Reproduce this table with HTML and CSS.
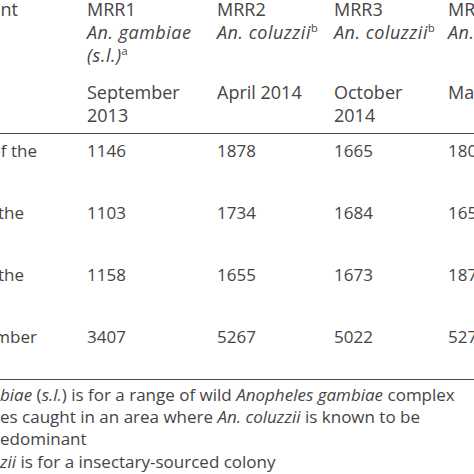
FILE: index.html
```html
<!DOCTYPE html>
<html>
<head>
<meta charset="utf-8">
<link rel="stylesheet" href="styles.css">
</head>
<body>
<div class="frame">
  <table class="tbl">
    <colgroup>
      <col class="w1"><col class="w2"><col class="w3"><col class="w4"><col class="w5">
    </colgroup>
    <thead>
      <tr class="h1">
        <td class="c1 head">Treatment</td>
        <td>MRR1<br><i>An. gambiae (s.l.)</i><sup>a</sup></td>
        <td>MRR2<br><i>An. coluzzii</i><sup>b</sup></td>
        <td>MRR3<br><i>An. coluzzii</i><sup>b</sup></td>
        <td>MRR4<br><i>An. coluzzii</i><sup>b</sup></td>
      </tr>
      <tr class="h2">
        <td class="c1"></td>
        <td>September 2013</td>
        <td>April 2014</td>
        <td>October 2014</td>
        <td>May 2015</td>
      </tr>
    </thead>
    <tbody>
      <tr>
        <td class="c1">Number of the</td>
        <td>1146</td><td>1878</td><td>1665</td><td>1800</td>
      </tr>
      <tr>
        <td class="c1 short">Caught in the</td>
        <td>1103</td><td>1734</td><td>1684</td><td>1650</td>
      </tr>
      <tr>
        <td class="c1 short">Caught in the</td>
        <td>1158</td><td>1655</td><td>1673</td><td>1870</td>
      </tr>
      <tr class="last">
        <td class="c1">Total number</td>
        <td>3407</td><td>5267</td><td>5022</td><td>5270</td>
      </tr>
    </tbody>
  </table>
  <div class="notes">
    <div class="note"><i>biae</i> (<i>s.l.</i>) is for a range of wild <i>Anopheles gambiae</i> complex</div>
    <div class="note">es caught in an area where <i>An. coluzzii</i> is known to be</div>
    <div class="note">edominant</div>
    <div class="note"><i>zii</i> is for a insectary-sourced colony</div>
  </div>
</div>
</body>
</html>
```

FILE: styles.css
```css
html, body {
  margin: 0;
  padding: 0;
  background: #ffffff;
}
.frame {
  width: 474px;
  height: 474px;
  overflow: hidden;
  font-family: "Open Sans", "Liberation Sans", sans-serif;
  font-size: 17px;
  font-weight: 400;
  color: #454545;
}
.tbl {
  table-layout: fixed;
  border-collapse: collapse;
  width: 748px;
  margin-left: -150px;
  margin-top: -2px;
}
.w1 { width: 237px; }
.w2 { width: 130px; }
.w3 { width: 117px; }
.w4 { width: 114px; }
.w5 { width: 150px; }
.tbl td {
  padding: 0 10px 0 0;
  vertical-align: top;
  text-align: left;
  line-height: 23px;
}
.tbl thead td {
  font-size: 18px;
}
.tbl thead i {
  letter-spacing: 0.5px;
}
.tbl td.c1 {
  text-align: right;
  white-space: nowrap;
  padding-right: 50px;
}
.tbl td.c1.short { padding-right: 63px; }
.tbl td.c1.head { padding-right: 69px; }
.h1 td { padding-bottom: 14px; }
.h2 td {
  padding-bottom: 6px;
  border-bottom: 1px solid #4a4a4a;
}
.tbl tbody td {
  padding-top: 5px;
  padding-bottom: 34px;
}
.tbl tbody tr.last td {
  padding-bottom: 31px;
  border-bottom: 1px solid #4a4a4a;
}
sup {
  font-size: 11px;
  line-height: 0;
  vertical-align: 7px;
  font-style: normal;
  letter-spacing: 0;
}
.notes {
  margin-top: 4px;
}
.note {
  white-space: nowrap;
  line-height: 22.2px;
}
```
